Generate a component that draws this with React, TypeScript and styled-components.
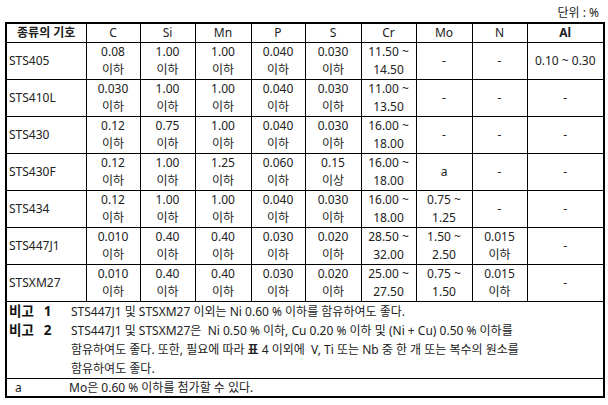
import React from 'react';
import styled, {createGlobalStyle} from 'styled-components';

const GlobalStyle = createGlobalStyle`
  html, body {
    margin: 0;
    padding: 0;
    background: #fff;
  }
  body {
    font-family: 'Noto Sans', 'Noto Sans CJK KR', sans-serif;
    color: #222;
  }
`;

const Page = styled.div`
  width: 608px;
  height: 405px;
  padding: 4px 5px 0 5px;
  box-sizing: border-box;
`;

const Unit = styled.div`
  height: 18px;
  line-height: 18px;
  font-size: 12px;
  text-align: right;
  padding-right: 4px;
`;

const Table = styled.table`
  width: 598px;
  border-collapse: collapse;
  table-layout: fixed;
  border: 2px solid #000;
  font-size: 12px;
`;

const Th = styled.th<{$bold?: boolean}>`
  height: 18px;
  padding: 0;
  border: 1px solid #000;
  font-weight: ${({$bold}) => ($bold ? 700 : 400)};
  line-height: 18px;
  text-align: center;
`;

const Td = styled.td<{$left?: boolean}>`
  height: 36px;
  padding: 0 ${({$left}) => ($left ? '2px' : '0')};
  border: 1px solid #000;
  line-height: 18px;
  text-align: ${({$left}) => ($left ? 'left' : 'center')};
  vertical-align: middle;
  white-space: nowrap;
`;

const NoteCell = styled.td`
  height: 76px;
  padding: 0 0 0 1px;
  border: 1px solid #000;
  vertical-align: top;
`;

const NoteRow = styled.div`
  display: grid;
  grid-template-columns: 63px 1fr;
  line-height: 19px;
`;

const NoteLabel = styled.div`
  display: flex;
  gap: 10px;
  font-size: 13.5px;
  font-weight: 700;
  color: #111;
  padding-left: 1px;
`;

const NoteText = styled.div`
  font-size: 12px;
  white-space: pre;
`;

const FootCell = styled.td`
  height: 17px;
  padding: 0;
  border: 1px solid #000;
`;

const FootRow = styled.div`
  display: grid;
  grid-template-columns: 54px 1fr;
  line-height: 17px;
  font-size: 12px;
  padding-left: 8px;
`;

const widths = [80, 54, 55, 56, 54, 56, 55, 56, 55, 77];
const headers = ['C', 'Si', 'Mn', 'P', 'S', 'Cr', 'Mo', 'N'];

type Row = {name: string; cells: string[][]};

const rows: Row[] = [
  {name: 'STS405', cells: [['0.08', '이하'], ['1.00', '이하'], ['1.00', '이하'], ['0.040', '이하'], ['0.030', '이하'], ['11.50 ~', '14.50'], ['-'], ['-'], ['0.10 ~ 0.30']]},
  {name: 'STS410L', cells: [['0.030', '이하'], ['1.00', '이하'], ['1.00', '이하'], ['0.040', '이하'], ['0.030', '이하'], ['11.00 ~', '13.50'], ['-'], ['-'], ['-']]},
  {name: 'STS430', cells: [['0.12', '이하'], ['0.75', '이하'], ['1.00', '이하'], ['0.040', '이하'], ['0.030', '이하'], ['16.00 ~', '18.00'], ['-'], ['-'], ['-']]},
  {name: 'STS430F', cells: [['0.12', '이하'], ['1.00', '이하'], ['1.25', '이하'], ['0.060', '이하'], ['0.15', '이상'], ['16.00 ~', '18.00'], ['a'], ['-'], ['-']]},
  {name: 'STS434', cells: [['0.12', '이하'], ['1.00', '이하'], ['1.00', '이하'], ['0.040', '이하'], ['0.030', '이하'], ['16.00 ~', '18.00'], ['0.75 ~', '1.25'], ['-'], ['-']]},
  {name: 'STS447J1', cells: [['0.010', '이하'], ['0.40', '이하'], ['0.40', '이하'], ['0.030', '이하'], ['0.020', '이하'], ['28.50 ~', '32.00'], ['1.50 ~', '2.50'], ['0.015', '이하'], ['-']]},
  {name: 'STSXM27', cells: [['0.010', '이하'], ['0.40', '이하'], ['0.40', '이하'], ['0.030', '이하'], ['0.020', '이하'], ['25.00 ~', '27.50'], ['0.75 ~', '1.50'], ['0.015', '이하'], ['-']]},
];

const Cell = ({lines}: {lines: string[]}) => (
  <Td>
    {lines.map((l, i) => (
      <React.Fragment key={i}>
        {i > 0 && <br />}
        {l}
      </React.Fragment>
    ))}
  </Td>
);

const App = () => (
  <Page>
    <GlobalStyle />
    <Unit>단위 : %</Unit>
    <Table>
      <colgroup>
        {widths.map((w, i) => (
          <col key={i} style={{width: w}} />
        ))}
      </colgroup>
      <thead>
        <tr>
          <Th $bold>종류의 기호</Th>
          {headers.map(h => (
            <Th key={h}>{h}</Th>
          ))}
          <Th $bold>Al</Th>
        </tr>
      </thead>
      <tbody>
        {rows.map(r => (
          <tr key={r.name}>
            <Td $left>{r.name}</Td>
            {r.cells.map((c, i) => (
              <Cell key={i} lines={c} />
            ))}
          </tr>
        ))}
        <tr>
          <NoteCell colSpan={10}>
            <NoteRow>
              <NoteLabel>
                <span>비고</span>
                <span>1</span>
              </NoteLabel>
              <NoteText>STS447J1 및 STSXM27 이외는 Ni 0.60 % 이하를 함유하여도 좋다.</NoteText>
            </NoteRow>
            <NoteRow>
              <NoteLabel>
                <span>비고</span>
                <span>2</span>
              </NoteLabel>
              <NoteText>STS447J1 및 STSXM27은  Ni 0.50 % 이하, Cu 0.20 % 이하 및 (Ni + Cu) 0.50 % 이하를</NoteText>
            </NoteRow>
            <NoteRow>
              <span />
              <NoteText>
                함유하여도 좋다. 또한, 필요에 따라 <b>표</b> 4 이외에  V, Ti 또는 Nb 중 한 개 또는 복수의 원소를
              </NoteText>
            </NoteRow>
            <NoteRow>
              <span />
              <NoteText>함유하여도 좋다.</NoteText>
            </NoteRow>
          </NoteCell>
        </tr>
        <tr>
          <FootCell colSpan={10}>
            <FootRow>
              <span>a</span>
              <span>Mo은 0.60 % 이하를 첨가할 수 있다.</span>
            </FootRow>
          </FootCell>
        </tr>
      </tbody>
    </Table>
  </Page>
);

export default App;
